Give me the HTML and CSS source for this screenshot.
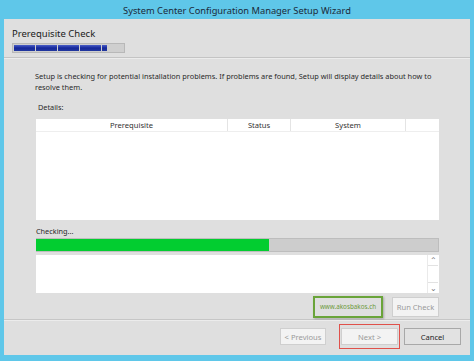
FILE: index.html
```html
<!DOCTYPE html>
<html lang="en">
<head>
  <meta charset="UTF-8">
  <title>System Center Configuration Manager Setup Wizard</title>
  <link rel="stylesheet" href="styles.css">
</head>
<body>
  <div class="window">
    <div class="titlebar">System Center Configuration Manager Setup Wizard</div>

    <div class="client">
      <div class="header">
        <div class="page-title">Prerequisite Check</div>
        <div class="steps">
          <span class="step"></span>
          <span class="step"></span>
          <span class="step"></span>
          <span class="step"></span>
          <span class="step small"></span>
        </div>
      </div>

      <div class="main">
        <p class="intro">Setup is checking for potential installation problems. If problems are found, Setup will display details about how to resolve them.</p>
        <div class="label details">Details:</div>

        <div class="grid">
          <div class="grid-head">
            <span class="col col-pre">Prerequisite</span>
            <span class="col col-status">Status</span>
            <span class="col col-sys">System</span>
            <span class="col col-rest"></span>
          </div>
        </div>

        <div class="label checking">Checking...</div>
        <div class="progress"><div class="fill" style="width: 58%"></div></div>

        <div class="log">
          <div class="scroll">
            <span class="arrow">&#8963;</span>
            <span class="thumb"></span>
            <span class="arrow">&#8964;</span>
          </div>
        </div>

        <div class="actions">
          <span class="watermark">www.akosbakos.ch</span>
          <button class="btn" disabled>Run Check</button>
        </div>
      </div>

      <div class="footer">
        <button class="btn" disabled>&lt; Previous</button>
        <span class="highlight"><button class="btn" disabled>Next &gt;</button></span>
        <button class="btn cancel">Cancel</button>
      </div>
    </div>
  </div>
</body>
</html>
```

FILE: styles.css
```css
body {
  margin: 0;
  background: #5fc7e9;
  font-family: "Noto Sans", "Open Sans", sans-serif;
  color: #222;
}

.window {
  width: 474px;
  height: 361px;
  display: flex;
  flex-direction: column;
}

.titlebar {
  height: 19px;
  line-height: 21px;
  text-align: center;
  font-size: 9.3px;
  color: #1c2a3a;
}

.client {
  margin: 0 4px 6px 4px;
  flex: 1;
  background: #dfdfdf;
  display: flex;
  flex-direction: column;
}

.header {
  height: 38px;
  padding-left: 8px;
  border-bottom: 1px solid #c4c4c4;
  box-shadow: 0 1px 0 #ececec;
}

.page-title {
  font-size: 9.5px;
  padding-top: 5px;
  height: 19px;
  line-height: 19px;
  color: #1a1a1a;
}

.steps {
  display: flex;
  width: 109px;
  height: 6px;
  padding: 1px;
  background: #cfcfcf;
  border: 1px solid #b8b8b8;
  gap: 1px;
}

.step {
  width: 21px;
  background: linear-gradient(#4a5ec8, #15279a 50%, #23399f);
}

.step.small {
  width: 5px;
}

.main {
  height: 261px;
  padding: 0 31px 0 32px;
  display: flex;
  flex-direction: column;
  border-bottom: 1px solid #c6c6c6;
}

.intro {
  margin: 13px 0 0 -1px;
  font-size: 7.4px;
  line-height: 11px;
  color: #2a2a2a;
}

.label {
  font-size: 7.3px;
  color: #2a2a2a;
}

.details {
  margin: 8px 0 0 2px;
  height: 12px;
  line-height: 12px;
}

.grid {
  margin-top: 6px;
  height: 101px;
  background: #fff;
}

.grid-head {
  display: flex;
  height: 12px;
  border-bottom: 1px solid #eeeeee;
  font-size: 7.6px;
  line-height: 12px;
  color: #333;
}

.col {
  text-align: center;
  border-right: 1px solid #e4e4e4;
}

.col-pre { width: 191px; }
.col-status { width: 62px; }
.col-sys { width: 114px; }
.col-rest { flex: 1; border-right: none; }

.checking {
  margin-top: 4px;
  height: 14px;
  line-height: 14px;
}

.progress {
  height: 12px;
  background: #cdcdcd;
  border: 1px solid #bdbdbd;
  border-left: none;
}

.fill {
  height: 100%;
  background: #02cd30;
}

.log {
  margin-top: 3px;
  height: 38px;
  background: #fff;
  display: flex;
  justify-content: flex-end;
}

.scroll {
  width: 10px;
  margin-right: 1px;
  display: flex;
  flex-direction: column;
  border-left: 1px solid #eaeaea;
}

.arrow {
  height: 10px;
  font-size: 8px;
  line-height: 10px;
  text-align: center;
  color: #777;
}

.thumb {
  flex: 1;
  border-top: 1px solid #e2e2e2;
  border-bottom: 1px solid #e2e2e2;
}

.actions {
  margin-top: 3px;
  display: flex;
  justify-content: flex-end;
  align-items: center;
  gap: 9px;
}

.watermark {
  width: 66px;
  height: 18px;
  line-height: 18px;
  border: 2px solid #6aa43a;
  font-size: 6.3px;
  text-align: center;
  color: #6d9a3d;
  box-shadow: 1px 1px 2px rgba(0,0,0,0.25);
}

.btn {
  height: 20px;
  padding: 0;
  font-family: inherit;
  font-size: 7.6px;
  background: #f3f3f3;
  border: 1px solid #cfcfcf;
  color: #9a9a9a;
}

.actions .btn {
  width: 47px;
}

.footer {
  flex: 1;
  display: flex;
  justify-content: flex-end;
  align-items: center;
  padding: 0 9px 2px 0;
  box-shadow: inset 0 1px 0 #ececec;
}

.footer .btn {
  width: 57px;
  height: 17px;
}

.footer > .btn:first-child {
  width: 46px;
  margin-right: 13px;
}

.highlight {
  padding: 3px 1px;
  border: 1px solid #e0514b;
  margin-right: 4px;
  display: flex;
}

.cancel {
  background: #e2e2e2;
  border-color: #a8a8a8;
  color: #1e1e1e;
}
```
